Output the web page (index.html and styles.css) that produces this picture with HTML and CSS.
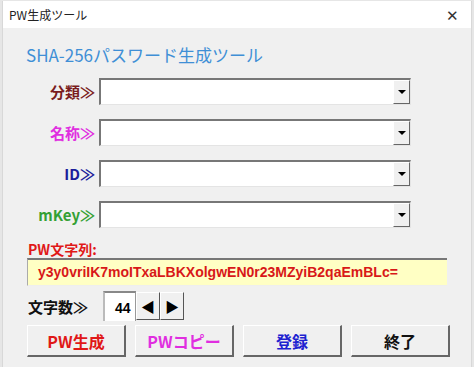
FILE: index.html
```html
<!DOCTYPE html>
<html lang="ja">
<head>
    <meta charset="UTF-8">
    <title>PW生成ツール</title>
    <link rel="stylesheet" href="styles.css">
</head>
<body>
    <div class="window">
        <div class="titlebar">
            <span>PW生成ツール</span>
            <span class="close">&#x2715;</span>
        </div>
        <div class="content">
            <h2 class="heading">SHA-256パスワード生成ツール</h2>
            <div class="row">
                <span class="label c-bunrui">分類≫</span>
                <div class="combo"><div class="combo-text"></div><div class="combo-btn"><span class="tri"></span></div></div>
            </div>
            <div class="row">
                <span class="label c-meisho">名称≫</span>
                <div class="combo"><div class="combo-text"></div><div class="combo-btn"><span class="tri"></span></div></div>
            </div>
            <div class="row">
                <span class="label c-id">ID≫</span>
                <div class="combo"><div class="combo-text"></div><div class="combo-btn"><span class="tri"></span></div></div>
            </div>
            <div class="row">
                <span class="label c-mkey">mKey≫</span>
                <div class="combo"><div class="combo-text"></div><div class="combo-btn"><span class="tri"></span></div></div>
            </div>
            <div class="pw-label">PW文字列:</div>
            <div class="pw-box">y3y0vriIK7moITxaLBKXolgwEN0r23MZyiB2qaEmBLc=</div>
            <div class="count-row">
                <span class="count-label">文字数≫</span>
                <div class="count-box">44</div>
                <div class="spin">&#9664;</div>
                <div class="spin">&#9654;</div>
            </div>
            <div class="buttons">
                <button class="btn c-red">PW生成</button>
                <button class="btn c-meisho">PWコピー</button>
                <button class="btn c-blue">登録</button>
                <button class="btn c-black">終了</button>
            </div>
        </div>
    </div>
</body>
</html>
```

FILE: styles.css
```css
body {
    margin: 0;
    width: 474px;
    height: 367px;
    overflow: hidden;
    background-color: #e6e6e6;
    font-family: "Noto Sans CJK JP", "Liberation Sans", sans-serif;
}
.window {
    margin: 1px 2px 0 2px;
    width: 468px;
    height: 366px;
    background-color: #f0f0f0;
    border-left: 1px solid #d8d8d8;
    border-right: 1px solid #d8d8d8;
}
.titlebar {
    height: 27px;
    background: white;
    display: flex;
    justify-content: space-between;
    align-items: center;
    padding: 0 12px 0 6px;
    font-size: 12px;
    color: #222;
}
.close {
    font-size: 15px;
    color: #333;
}
.content {
    padding: 14px 0 0 21px;
}
.heading {
    margin: 0 0 10px 2px;
    height: 26px;
    font-size: 17px;
    font-weight: normal;
    color: #3f8fd6;
    line-height: 26px;
}
.row {
    display: flex;
    align-items: center;
    height: 27px;
    margin-bottom: 14px;
}
.label {
    width: 71px;
    padding-right: 4px;
    text-align: right;
    font-size: 15px;
    font-weight: bold;
}
.c-bunrui { color: #7a1c20; }
.c-meisho { color: #e02ee0; }
.c-id { color: #1c1c9a; }
.c-mkey { color: #34a034; }
.c-red { color: #e01818; }
.c-blue { color: #1e22d0; }
.c-black { color: #111; }
.combo {
    display: flex;
    width: 312px;
    height: 27px;
    box-sizing: border-box;
    background: white;
    border-top: 2px solid #777;
    border-left: 2px solid #777;
    border-bottom: 1px solid #e4e4e4;
    border-right: 1px solid #e4e4e4;
}
.combo-text {
    flex: 1;
}
.combo-btn {
    width: 15px;
    background: #f0f0f0;
    border-left: 1px solid #fff;
    border-top: 1px solid #fff;
    border-right: 1px solid #666;
    border-bottom: 1px solid #666;
    display: flex;
    align-items: center;
    justify-content: center;
}
.tri {
    width: 0;
    height: 0;
    border-left: 4px solid transparent;
    border-right: 4px solid transparent;
    border-top: 4px solid #000;
}
.pw-label {
    margin-top: -1px;
    height: 17px;
    font-size: 14px;
    font-weight: bold;
    color: #e01818;
    line-height: 17px;
    padding-left: 4px;
}
.pw-box {
    width: 420px;
    height: 28px;
    box-sizing: border-box;
    background: #ffffc4;
    border-top: 2px solid #777;
    border-left: 1px solid #aaa;
    border-bottom: 1px solid #eee;
    padding-left: 10px;
    font-family: "Liberation Sans", sans-serif;
    font-size: 14px;
    font-weight: bold;
    color: #d81818;
    line-height: 25px;
    margin-left: 3px;
}
.count-row {
    display: flex;
    align-items: center;
    height: 30px;
    margin-top: 5px;
}
.count-label {
    width: 75px;
    padding-left: 4px;
    font-size: 15px;
    font-weight: bold;
    color: #111;
}
.count-box {
    width: 33px;
    height: 30px;
    box-sizing: border-box;
    background: white;
    border-top: 2px solid #888;
    border-left: 2px solid #bbb;
    border-right: 1px solid #999;
    font-family: "Liberation Sans", sans-serif;
    font-size: 14px;
    font-weight: bold;
    line-height: 30px;
    padding-left: 10px;
}
.spin {
    width: 24px;
    height: 28px;
    box-sizing: border-box;
    background: #f0f0f0;
    border-top: 1px solid #fff;
    border-left: 1px solid #fff;
    border-right: 1px solid #555;
    border-bottom: 1px solid #555;
    font-size: 14px;
    text-align: center;
    line-height: 26px;
}
.buttons {
    display: flex;
    gap: 9px;
    margin-top: 4px;
    padding-left: 3px;
}
.btn {
    width: 99px;
    height: 32px;
    background: #f0f0f0;
    border-top: 1px solid #fff;
    border-left: 1px solid #fff;
    border-right: 2px solid #666;
    border-bottom: 2px solid #666;
    font-family: "Noto Sans CJK JP", sans-serif;
    font-size: 16px;
    font-weight: bold;
    padding: 0;
}
```
